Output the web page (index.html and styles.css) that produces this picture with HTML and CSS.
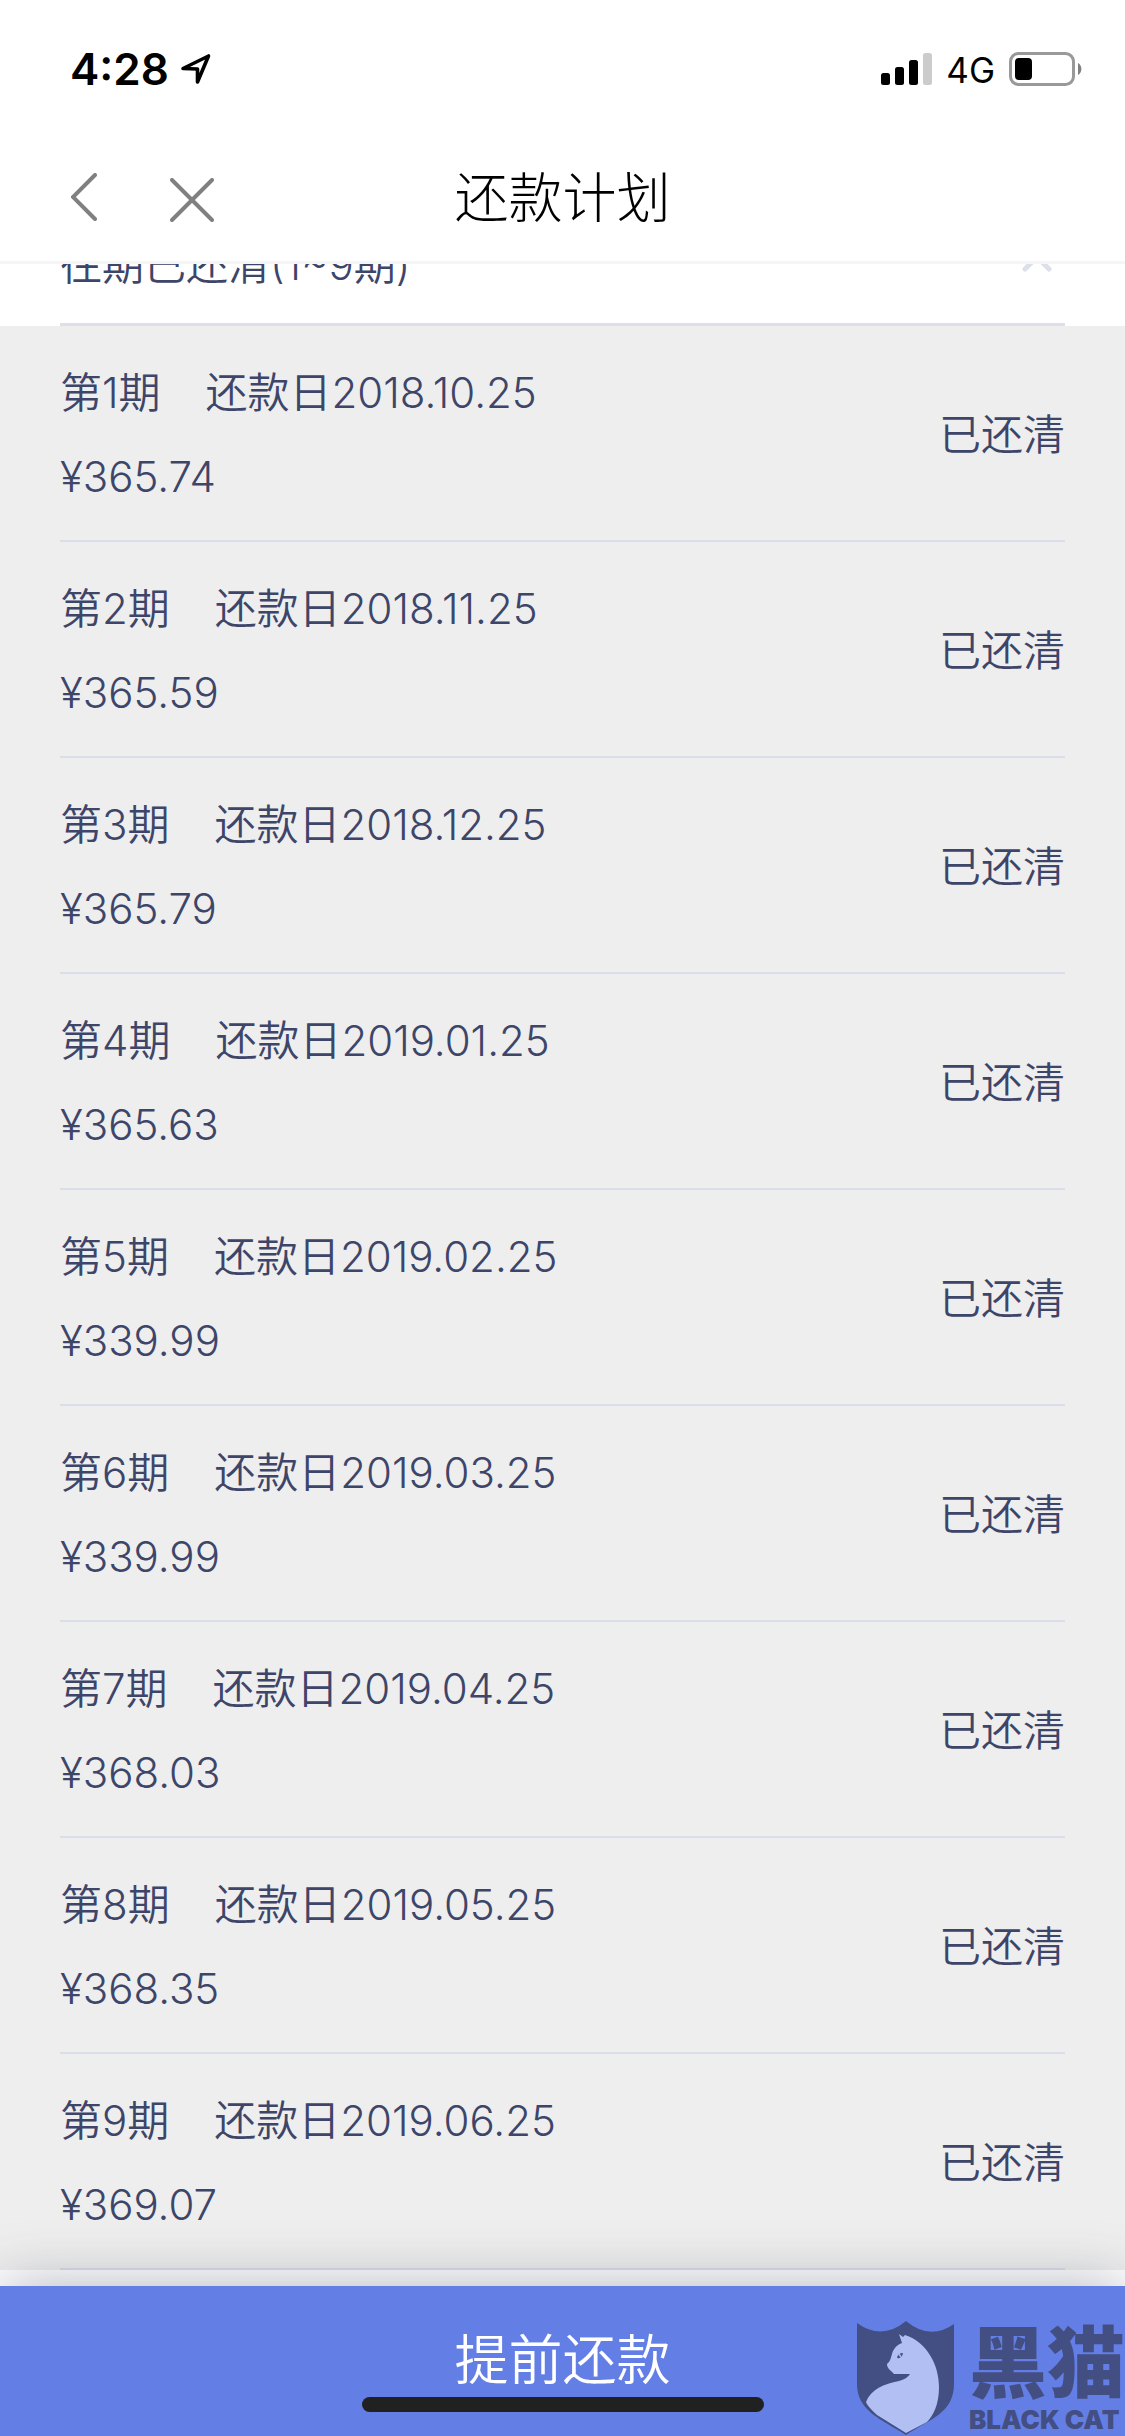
FILE: index.html
```
<!DOCTYPE html>
<html lang="zh-CN">

<head>
  <meta charset="UTF-8">
  <meta name="viewport" content="width=device-width, initial-scale=1.0">
  <title>还款计划</title>
  <link rel="stylesheet" href="styles.css">
</head>

<body>
  <header class="header">
    <div class="status">
      <span class="time">4:28</span>
      <svg class="locate" width="32" height="32" viewBox="0 0 32 32">
        <path d="M3 15.500L28.500 3L17.500 29V16z" fill="none" stroke="#000" stroke-width="3.600" stroke-linejoin="round" />
      </svg>
      <svg class="signal" width="51" height="32" viewBox="0 0 51 32">
        <rect x="0" y="20" width="9" height="12" rx="2.500" />
        <rect x="14" y="14" width="9" height="18" rx="2.500" />
        <rect x="28" y="7" width="9" height="25" rx="2.500" />
        <rect x="42" y="0" width="9" height="32" rx="2.500" fill="#ccc" />
      </svg>
      <span class="network">4G</span>
      <svg class="battery" width="74" height="34" viewBox="0 0 74 34">
        <rect x="1.500" y="1.500" width="63" height="31" rx="8" fill="none" stroke="#999" stroke-width="3" />
        <rect x="6" y="6" width="17" height="22" rx="4" />
        <path d="M69 11a7 7 0 0 1 0 12z" fill="#808080" />
      </svg>
    </div>
    <nav class="nav">
      <button class="icon-btn" aria-label="返回">
        <svg width="26" height="48" viewBox="0 0 26 48">
          <path d="M24 2L2 24L24 46" />
        </svg>
      </button>
      <button class="icon-btn close" aria-label="关闭">
        <svg width="44" height="44" viewBox="0 0 44 44">
          <path d="M2 2L42 42M42 2L2 42" />
        </svg>
      </button>
      <h1 class="title">还款计划</h1>
    </nav>
  </header>

  <main class="plan">
    <button class="fold">
      <span>往期已还清(1~9期)</span>
      <svg width="30" height="22" viewBox="0 0 30 22">
        <path d="M3 15L15 3L27 15" />
      </svg>
    </button>
    <ul class="list">
      <li class="item">
        <div>
          <p><span class="no">第1期</span>还款日2018.10.25</p>
          <p>¥365.74</p>
        </div>
        <span>已还清</span>
      </li>
      <li class="item">
        <div>
          <p><span class="no">第2期</span>还款日2018.11.25</p>
          <p>¥365.59</p>
        </div>
        <span>已还清</span>
      </li>
      <li class="item">
        <div>
          <p><span class="no">第3期</span>还款日2018.12.25</p>
          <p>¥365.79</p>
        </div>
        <span>已还清</span>
      </li>
      <li class="item">
        <div>
          <p><span class="no">第4期</span>还款日2019.01.25</p>
          <p>¥365.63</p>
        </div>
        <span>已还清</span>
      </li>
      <li class="item">
        <div>
          <p><span class="no">第5期</span>还款日2019.02.25</p>
          <p>¥339.99</p>
        </div>
        <span>已还清</span>
      </li>
      <li class="item">
        <div>
          <p><span class="no">第6期</span>还款日2019.03.25</p>
          <p>¥339.99</p>
        </div>
        <span>已还清</span>
      </li>
      <li class="item">
        <div>
          <p><span class="no">第7期</span>还款日2019.04.25</p>
          <p>¥368.03</p>
        </div>
        <span>已还清</span>
      </li>
      <li class="item">
        <div>
          <p><span class="no">第8期</span>还款日2019.05.25</p>
          <p>¥368.35</p>
        </div>
        <span>已还清</span>
      </li>
      <li class="item">
        <div>
          <p><span class="no">第9期</span>还款日2019.06.25</p>
          <p>¥369.07</p>
        </div>
        <span>已还清</span>
      </li>
    </ul>
  </main>

  <footer class="footer">
    <button class="repay">提前还款</button>
    <div class="home-bar"></div>
    <div class="watermark">
      <svg width="98" height="115" viewBox="0 0 98 115">
        <path d="M0 2Q25 20 49 0Q73 20 97 3V63C97 92 73 98 49 114C24 98 0 90 0 63z" fill="#434e82" />
        <path d="M42 13L46 16L48 14C70 21 82 44 82 66C82 84 76 95 70 101L49 112L20 94Q10 85 9 81C14 68 27 63 42 60Q50 58 53 53L37 53C34 49 30 48 30 43C34 40 34 35 36 30Q39 24 45 22z" fill="#b1bff3" />
        <path d="M40 37Q41 32 46 32Q45 38 40 37z" fill="#434e82" />
        <path d="M42 33L44 36" stroke="#b1bff3" stroke-width="1.500" />
      </svg>
      <div class="brand">
        <span class="brand-cn">黑猫</span>
        <span class="brand-en">BLACK CAT</span>
      </div>
    </div>
  </footer>
</body>

</html>
```
FILE: styles.css
```
* {
  box-sizing: border-box;
}

body {
  margin: 0;
  min-height: 100vh;
  display: flex;
  flex-direction: column;
  background: #fff;
  color: #3d4569;
  font: 350 42px/60px Inter, "Noto Sans CJK SC", sans-serif;
}

button {
  padding: 0;
  border: 0;
  background: none;
  color: inherit;
  font: inherit;
}

.header {
  position: sticky;
  top: 0;
  z-index: 2;
  background: #fff;
  border-bottom: 3px solid #f5f5f5;
}

.status {
  height: 132px;
  padding: 6px 42px 0 70px;
  display: flex;
  align-items: center;
  color: #000;
}

.time {
  font-size: 44px;
  font-weight: 600;
}

.locate {
  margin-left: 11px;
}

.signal {
  margin-left: auto;
}

.network {
  margin: 0 14px;
  padding-top: 2px;
  font-size: 35px;
  font-weight: 400;
}

.nav {
  height: 129px;
  padding: 0 71px;
  display: grid;
  grid-template-columns: 99px 98px 1fr 197px;
  align-items: center;
}

.icon-btn {
  display: flex;
}

.close {
  padding-top: 6px;
}

.icon-btn path {
  fill: none;
  stroke: #808080;
  stroke-width: 4;
  stroke-linecap: round;
}

.title {
  margin: 0;
  padding-top: 4px;
  text-align: center;
  color: #000;
  font-size: 54px;
  font-weight: 300;
}

/* the fold row is half scrolled under the header */
.plan {
  margin-top: -62px;
}

.fold {
  width: calc(100% - 120px);
  height: 124px;
  margin: 0 60px;
  padding: 4px 13px 0 0;
  display: flex;
  align-items: center;
  justify-content: space-between;
  border-bottom: 3px solid #dde0ea;
}

.fold path {
  fill: none;
  stroke: #dde0ea;
  stroke-width: 5;
  stroke-linecap: round;
}

.list {
  margin: 0;
  padding: 0 60px;
  list-style: none;
  background: #eee;
}

.item {
  height: 216px;
  padding-top: 3px;
  display: flex;
  align-items: center;
  justify-content: space-between;
  border-bottom: 2px solid #dadeea;
}

.item p {
  margin: 0;
}

.item p + p {
  margin-top: 24px;
}

.no {
  margin-right: 45px;
}

.footer {
  position: sticky;
  bottom: 0;
  margin-top: auto;
  box-shadow: 0 0 60px rgba(60, 66, 90, 0.4);
}

.repay {
  display: block;
  width: 100%;
  height: 150px;
  background: #637fe6;
  color: #fff;
  font-size: 54px;
}

.home-bar {
  position: absolute;
  left: 50%;
  bottom: 24px;
  width: 402px;
  height: 15px;
  border-radius: 8px;
  background: #212121;
  transform: translateX(-50%);
}

.watermark {
  position: absolute;
  right: 0;
  bottom: 0;
  display: flex;
  gap: 14px;
  color: #434e82;
}

.brand {
  display: flex;
  flex-direction: column;
  font-weight: 900;
}

.brand-cn {
  font-size: 78px;
  line-height: 86px;
}

.brand-en {
  font-size: 26px;
  line-height: 26px;
}
```
